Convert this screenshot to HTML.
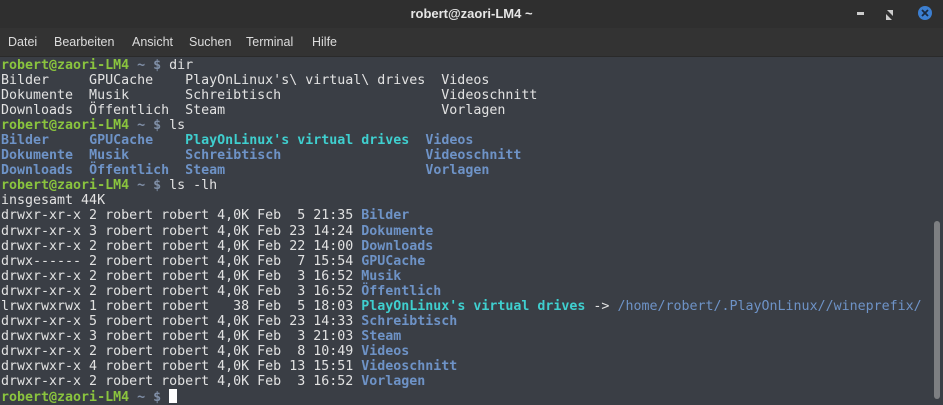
<!DOCTYPE html>
<html><head><meta charset="utf-8"><style>
*{margin:0;padding:0}
body{width:943px;height:403px;overflow:hidden;background:#3a3e45;position:relative;font-family:"Liberation Sans",sans-serif}
#title{position:absolute;left:0;top:0;width:943px;height:28px;background:#2f2f2f;color:#e6e6e6;font-weight:bold;font-size:13px;text-align:center;line-height:28px}
#menu{position:absolute;left:0;top:28px;width:943px;height:28px;background:#333333;border-bottom:1px solid #2a2a2a;color:#dcdcdc;font-size:12.5px;line-height:28px}
#menu span{position:absolute;top:0}
pre{position:absolute;left:1px;top:58px;font-family:"DejaVu Sans Mono","Liberation Mono",monospace;font-size:13.3px;line-height:15.05px;color:#e2e2e2}
.g{color:#8ac43e;font-weight:bold}
.p{color:#7f8ea6;font-weight:bold}
.b{color:#6e93c7;font-weight:bold}
.c{color:#3fcfcf;font-weight:bold}
.l{color:#6e93c7}
#cur{display:inline-block;width:8px;height:14px;background:#fff;vertical-align:-2px}
#sb{position:absolute;left:934px;top:221px;width:6px;height:178px;border-radius:3px;background:#7d7f82}
</style></head><body>
<div id="title">robert@zaori-LM4 ~</div>
<svg style="position:absolute;left:855px;top:6px" width="85" height="20">
<rect x="2" y="6" width="7" height="3" fill="#ccc"/>
<path d="M32 4h6v6zM37 14h-6v-6z" fill="#ccc"/>
<circle cx="70" cy="7" r="7" fill="#3c7fd1"/><path d="M67 4l6 6M73 4l-6 6" stroke="#1a2a40" stroke-width="1.8"/>
</svg>
<div id="menu"><span style="left:8px">Datei</span><span style="left:54px">Bearbeiten</span><span style="left:132px">Ansicht</span><span style="left:189px">Suchen</span><span style="left:246px">Terminal</span><span style="left:312px">Hilfe</span></div>
<pre><span class="g">robert@zaori-LM4</span> <span class="p">~ $</span> dir
Bilder     GPUCache    PlayOnLinux's\ virtual\ drives  Videos
Dokumente  Musik       Schreibtisch                    Videoschnitt
Downloads  Öffentlich  Steam                           Vorlagen
<span class="g">robert@zaori-LM4</span> <span class="p">~ $</span> ls
<span class="b">Bilder</span>     <span class="b">GPUCache</span>    <span class="c">PlayOnLinux's virtual drives</span>  <span class="b">Videos</span>
<span class="b">Dokumente</span>  <span class="b">Musik</span>       <span class="b">Schreibtisch</span>                  <span class="b">Videoschnitt</span>
<span class="b">Downloads</span>  <span class="b">Öffentlich</span>  <span class="b">Steam</span>                         <span class="b">Vorlagen</span>
<span class="g">robert@zaori-LM4</span> <span class="p">~ $</span> ls -lh
insgesamt 44K
drwxr-xr-x 2 robert robert 4,0K Feb  5 21:35 <span class="b">Bilder</span>
drwxr-xr-x 3 robert robert 4,0K Feb 23 14:24 <span class="b">Dokumente</span>
drwxr-xr-x 2 robert robert 4,0K Feb 22 14:00 <span class="b">Downloads</span>
drwx------ 2 robert robert 4,0K Feb  7 15:54 <span class="b">GPUCache</span>
drwxr-xr-x 2 robert robert 4,0K Feb  3 16:52 <span class="b">Musik</span>
drwxr-xr-x 2 robert robert 4,0K Feb  3 16:52 <span class="b">Öffentlich</span>
lrwxrwxrwx 1 robert robert   38 Feb  5 18:03 <span class="c">PlayOnLinux's virtual drives</span> -&gt; <span class="l">/home/robert/.PlayOnLinux//wineprefix/</span>
drwxr-xr-x 5 robert robert 4,0K Feb 23 14:33 <span class="b">Schreibtisch</span>
drwxrwxr-x 3 robert robert 4,0K Feb  3 21:03 <span class="b">Steam</span>
drwxr-xr-x 2 robert robert 4,0K Feb  8 10:49 <span class="b">Videos</span>
drwxrwxr-x 4 robert robert 4,0K Feb 13 15:51 <span class="b">Videoschnitt</span>
drwxr-xr-x 2 robert robert 4,0K Feb  3 16:52 <span class="b">Vorlagen</span>
<span class="g">robert@zaori-LM4</span> <span class="p">~ $</span> <span id="cur"></span></pre>
<div id="sb"></div>
</body></html>
